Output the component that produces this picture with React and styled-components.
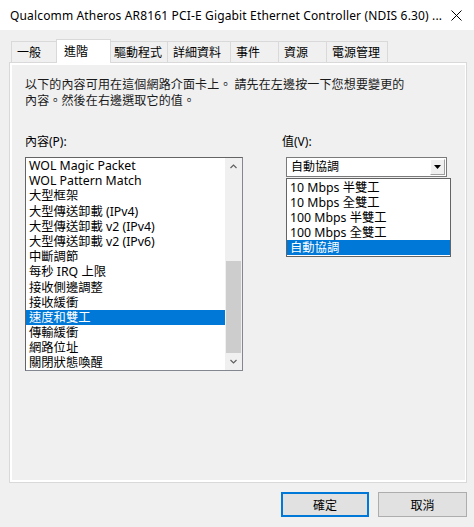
import React from 'react';
import styled, { createGlobalStyle, css } from 'styled-components';

const UI_FONT = `"Noto Sans", "Noto Sans CJK TC", sans-serif`;
const CJK_FONT = `"Noto Sans CJK TC", "Noto Sans", sans-serif`;

const GlobalStyle = createGlobalStyle`
  html, body {
    margin: 0;
    padding: 0;
    background: #f0f0f0;
  }
  body {
    font-family: ${UI_FONT};
    font-size: 12px;
    color: #000;
  }
`;

// Window
const Window = styled.div`
  width: 474px;
  height: 527px;
  display: flex;
  flex-direction: column;
  background: #f0f0f0;
  overflow: hidden;
`;

// Title bar (상단)
const TitleBar = styled.div`
  height: 30px;
  flex: 0 0 30px;
  background: #fff;
  display: flex;
  align-items: center;
  justify-content: space-between;
  padding: 0 12px 0 10px;
  box-sizing: border-box;
`;

const Title = styled.div`
  font-size: 12px;
  letter-spacing: 0.15px;
  white-space: nowrap;
  color: #000;
`;

const CloseIcon = () => (
  <svg width="11" height="11" viewBox="0 0 11 11">
    <path d="M0.5 0.5 L10.5 10.5 M10.5 0.5 L0.5 10.5" stroke="#000" strokeWidth="1" fill="none" />
  </svg>
);

const Body = styled.div`
  flex: 1;
  display: flex;
  flex-direction: column;
  padding: 9px 7px 10px 9px;
  box-sizing: border-box;
`;

// Tabs
const TabRow = styled.div`
  display: flex;
  align-items: flex-end;
  height: 23px;
  padding-left: 2px;
  position: relative;
  z-index: 1;
`;

const Tab = styled.div`
  box-sizing: border-box;
  width: ${p => p.$w}px;
  height: 21px;
  padding-left: 5px;
  line-height: 20px;
  font-family: ${CJK_FONT};
  font-size: 12px;
  background: #f0f0f0;
  border: 1px solid #d9d9d9;
  border-bottom: none;
  border-left-width: 0;
  white-space: nowrap;
  ${p => p.$first && css`border-left-width: 1px;`}
  ${p => p.$active && css`
    height: 24px;
    margin: 0 -2px -1px -2px;
    padding-left: 7px;
    line-height: 22px;
    background: #fff;
    border-left-width: 1px;
    position: relative;
  `}
`;

const Panel = styled.div`
  flex: 1;
  border: 1px solid #d9d9d9;
  background: #fff;
  padding: 2px;
  display: flex;
`;

const Page = styled.div`
  flex: 1;
  background: #f0f0f0;
  padding: 11px 13px;
  display: flex;
  flex-direction: column;
`;

const Description = styled.div`
  line-height: 16px;
  font-family: ${CJK_FONT};
  font-size: 12px;
  letter-spacing: 0.15px;
  color: #1a1a1a;
`;

const Columns = styled.div`
  display: flex;
  margin-top: 26px;
`;

const Column = styled.div`
  width: ${p => p.$w}px;
  margin-left: ${p => p.$ml || 0}px;
  display: flex;
  flex-direction: column;
`;

const Label = styled.div`
  line-height: 16px;
  height: 16px;
  margin-bottom: 7px;
`;

// Listbox
const ListBox = styled.div`
  height: 214px;
  box-sizing: border-box;
  background: #fff;
  border: 1px solid #828790;
  border-top-color: #646464;
  border-left-color: #646464;
  display: flex;
`;

const Items = styled.div`
  flex: 1;
  overflow: hidden;
`;

const Item = styled.div`
  height: 15.2px;
  line-height: 15px;
  padding-left: 3px;
  white-space: nowrap;
  font-size: 12.3px;
  color: #000;
  ${p => p.$selected && css`
    background: #0078d7;
    color: #fff;
  `}
`;

const ScrollBar = styled.div`
  width: 17px;
  background: #f0f0f0;
  display: flex;
  flex-direction: column;
`;

const ScrollArrow = styled.div`
  height: 17px;
  display: flex;
  align-items: center;
  justify-content: center;
`;

const ScrollTrack = styled.div`
  flex: 1;
  display: flex;
  flex-direction: column;
  justify-content: flex-end;
  padding: 0 1px;
`;

const Thumb = styled.div`
  height: 92px;
  background: #cdcdcd;
`;

const Chevron = ({ up }) => (
  <svg width="7" height="5" viewBox="0 0 7 5">
    <path
      d={up ? 'M0.5 4 L3.5 1 L6.5 4' : 'M0.5 1 L3.5 4 L6.5 1'}
      stroke="#606060"
      strokeWidth="1.2"
      fill="none"
    />
  </svg>
);

// Combo box
const Combo = styled.div`
  height: 20px;
  box-sizing: border-box;
  width: 161px;
  margin-left: 4px;
  background: #fff;
  border: 1px solid #7a7a7a;
  display: flex;
  align-items: center;
  padding: 1px;
`;

const ComboText = styled.div`
  flex: 1;
  padding-left: 3px;
  line-height: 16px;
`;

const ComboButton = styled.div`
  width: 15px;
  height: 16px;
  box-sizing: border-box;
  background: #f0f0f0;
  border: 1px solid #a0a0a0;
  border-top-color: #fff;
  border-left-color: #fff;
  display: flex;
  align-items: center;
  justify-content: center;
`;

const DropList = styled.div`
  width: 165px;
  margin-left: 4px;
  margin-top: 1px;
  box-sizing: border-box;
  background: #fff;
  border: 1px solid #646464;
  padding: 0.5px 0;
`;

// Footer buttons
const Footer = styled.div`
  display: flex;
  justify-content: flex-end;
  gap: 9px;
  margin-top: 9px;
  height: 25px;
`;

const Button = styled.button`
  width: ${p => p.$w}px;
  height: 25px;
  box-sizing: border-box;
  background: #e1e1e1;
  border: 1px solid #adadad;
  font-family: ${CJK_FONT};
  font-size: 12px;
  color: #000;
  padding: 0;
  ${p => p.$default && css`
    border: 2px solid #0078d7;
  `}
`;

const TABS = [
  { label: '一般', w: 47 },
  { label: '進階', w: 55, active: true },
  { label: '驅動程式', w: 59 },
  { label: '詳細資料', w: 63 },
  { label: '事件', w: 48 },
  { label: '資源', w: 48 },
  { label: '電源管理', w: 61 },
];

const PROPERTIES = [
  'WOL Magic Packet',
  'WOL Pattern Match',
  '大型框架',
  '大型傳送卸載 (IPv4)',
  '大型傳送卸載 v2 (IPv4)',
  '大型傳送卸載 v2 (IPv6)',
  '中斷調節',
  '每秒 IRQ 上限',
  '接收側邊調整',
  '接收緩衝',
  '速度和雙工',
  '傳輸緩衝',
  '網路位址',
  '關閉狀態喚醒',
];

const VALUES = [
  '10 Mbps 半雙工',
  '10 Mbps 全雙工',
  '100 Mbps 半雙工',
  '100 Mbps 全雙工',
  '自動協調',
];

const App = () => {
  const selectedProperty = '速度和雙工';
  const selectedValue = '自動協調';

  return (
    <Window lang="zh-Hant-TW">
      <GlobalStyle />
      <TitleBar>
        <Title>Qualcomm Atheros AR8161 PCI-E Gigabit Ethernet Controller (NDIS 6.30) ...</Title>
        <CloseIcon />
      </TitleBar>
      <Body>
        <TabRow>
          {TABS.map((t, i) => (
            <Tab key={t.label} $w={t.w} $first={i === 0} $active={t.active}>
              {t.label}
            </Tab>
          ))}
        </TabRow>
        <Panel>
          <Page>
            <Description>
              以下的內容可用在這個網路介面卡上。 請先在左邊按一下您想要變更的
              <br />
              內容。然後在右邊選取它的值。
            </Description>
            <Columns>
              <Column $w={218}>
                <Label>內容(P):</Label>
                <ListBox>
                  <Items>
                    {PROPERTIES.map(p => (
                      <Item key={p} $selected={p === selectedProperty}>{p}</Item>
                    ))}
                  </Items>
                  <ScrollBar>
                    <ScrollArrow><Chevron up /></ScrollArrow>
                    <ScrollTrack><Thumb /></ScrollTrack>
                    <ScrollArrow><Chevron /></ScrollArrow>
                  </ScrollBar>
                </ListBox>
              </Column>
              <Column $w={170} $ml={39}>
                <Label>值(V):</Label>
                <Combo>
                  <ComboText>{selectedValue}</ComboText>
                  <ComboButton>
                    <svg width="7" height="4" viewBox="0 0 7 4">
                      <path d="M0 0 L7 0 L3.5 4 Z" fill="#000" />
                    </svg>
                  </ComboButton>
                </Combo>
                <DropList>
                  {VALUES.map(v => (
                    <Item key={v} $selected={v === selectedValue}>{v}</Item>
                  ))}
                </DropList>
              </Column>
            </Columns>
          </Page>
        </Panel>
        <Footer>
          <Button $w={88} $default>確定</Button>
          <Button $w={89}>取消</Button>
        </Footer>
      </Body>
    </Window>
  );
};

export default App;
